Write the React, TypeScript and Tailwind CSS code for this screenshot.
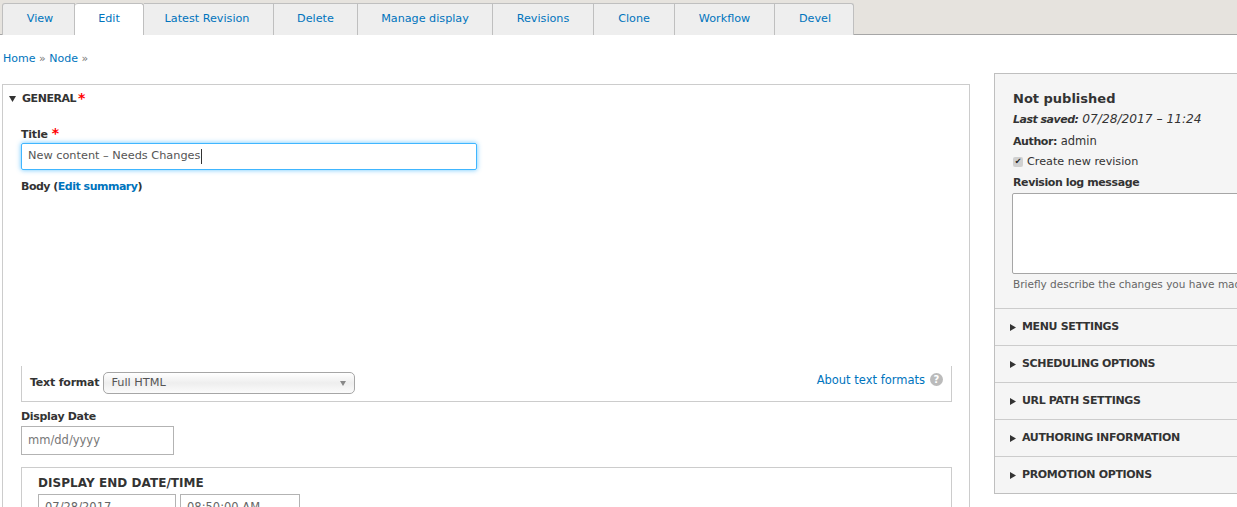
import React from 'react';

const tabs = [
  { label: 'View', width: 'w-[73px]', pad: 'pl-[3px]' },
  { label: 'Edit', width: 'w-[69px]', active: true, pad: '' },
  { label: 'Latest Revision', width: 'w-[130px]', pad: 'pr-[3px]' },
  { label: 'Delete', width: 'w-[84px]', pad: '' },
  { label: 'Manage display', width: 'w-[135px]', pad: '' },
  { label: 'Revisions', width: 'w-[101px]', pad: '' },
  { label: 'Clone', width: 'w-[81px]', pad: '' },
  { label: 'Workflow', width: 'w-[100px]', pad: '' },
  { label: 'Devel', width: 'w-[79px]', pad: 'pl-[2px]' },
];

const sections = [
  'MENU SETTINGS',
  'SCHEDULING OPTIONS',
  'URL PATH SETTINGS',
  'AUTHORING INFORMATION',
  'PROMOTION OPTIONS',
];

function Triangle({ open }: { open?: boolean }) {
  return open ? (
    <svg width="7" height="6" viewBox="0 0 7 6" className="shrink-0">
      <path d="M0 0h7L3.5 6z" fill="#333" />
    </svg>
  ) : (
    <svg width="6" height="7" viewBox="0 0 6 7" className="shrink-0">
      <path d="M0 0l6 3.5L0 7z" fill="#333" />
    </svg>
  );
}

export default function App() {
  return (
    <div className="h-[507px] w-[1237px] overflow-hidden bg-white font-['DejaVu_Sans',sans-serif] text-[12px] text-[#333]">
      <div className="flex h-[35px] border-b border-[#a6a6a6] bg-[#e6e3de] pl-[2px] pt-[3px]">
        {tabs.map(tab => (
          <a
            key={tab.label}
            className={`-mb-px flex ${tab.width} ${tab.pad} items-center justify-center border-r border-t border-[#bfbfbf] text-[11.2px] text-[#0074bd] first:border-l first:rounded-tl-[3px] last:rounded-tr-[3px] ${
              tab.active ? 'rounded-t-[3px] bg-white' : 'bg-[#eeeeee]'
            }`}
          >
            {tab.label}
          </a>
        ))}
      </div>

      <div className="pl-[3px] pt-[17px] text-[11px] leading-[14px] text-[#777]">
        <a className="text-[#0074bd]">Home</a> » <a className="text-[#0074bd]">Node</a> »
      </div>

      <div className="mt-[18px] flex items-start pl-[2px]">
        <div className="h-[600px] w-[968px] shrink-0 border border-[#ccc] pl-[18px] pr-[17px]">
          <div className="-ml-[12px] flex h-[28px] items-center gap-[6px]">
            <Triangle open />
            <span className="text-[11px] font-bold tracking-[-0.45px]">GENERAL</span>
            <span className="-ml-[4px] -mt-[2px] text-[14px] font-bold text-[#f00]">*</span>
          </div>

          <div className="mt-[14px] flex h-[16px] items-center gap-[4px] text-[11px] font-bold tracking-[-0.2px]">
            Title <span className="-mt-[4px] text-[14px] font-bold text-[#f00]">*</span>
          </div>
          <div className="flex h-[27px] w-[456px] items-center rounded-[2px] border border-[#40b6ff] pl-[6px] text-[11.3px] text-[#555] shadow-[0_0_5px_rgba(64,182,255,0.8)]">
            New content – Needs Changes
            <span className="ml-px h-[15px] w-px bg-[#333]" />
          </div>

          <div className="mt-[9px] h-[16px] text-[11px] font-bold leading-[16px] tracking-[-0.5px]">
            Body (<a className="text-[#0074bd]">Edit summary</a>)
          </div>

          <div className="mt-[171px] flex h-[36px] w-[931px] items-start justify-between border-x border-b border-[#ccc] pl-[8px] pr-[8px] pt-[6px]">
            <div className="flex items-center gap-[4px]">
              <span className="text-[11px] font-bold tracking-[-0.2px]">Text format</span>
              <div className="flex h-[22px] w-[252px] items-center justify-between rounded-[5px] border border-[#a6a6a6] bg-gradient-to-b from-white via-[#eeeeee] to-[#fbfbfb] pl-[7px] pr-[8px] text-[11.3px] text-[#555]">
                Full HTML
                <svg width="6" height="5" viewBox="0 0 6 5">
                  <path d="M0 0h6L3 5z" fill="#888" />
                </svg>
              </div>
            </div>
            <div className="flex items-center gap-[5px]">
              <a className="text-[11.5px] text-[#0074bd]">About text formats</a>
              <span className="-mt-[2px] flex h-[13px] w-[13px] items-center justify-center rounded-full bg-[#bbb] text-[10px] font-bold text-white">
                ?
              </span>
            </div>
          </div>

          <div className="mt-[7px] h-[16px] text-[11px] font-bold leading-[16px] tracking-[-0.3px]">Display Date</div>
          <div className="mt-px flex h-[29px] w-[153px] items-center border border-[#b3b3b3] pl-[6px] text-[11.5px] text-[#777]">
            mm/dd/yyyy
          </div>

          <div className="mt-[12px] h-[120px] w-[931px] border border-[#ccc] pl-[16px]">
            <div className="pt-[7px] text-[12px] font-bold leading-[16px] tracking-[0.05px]">DISPLAY END DATE/TIME</div>
            <div className="mt-[3px] flex gap-[4px] text-[11.5px] text-[#666]">
              <div className="flex h-[28px] w-[138px] items-center border border-[#b3b3b3] pl-[6px]">07/28/2017</div>
              <div className="flex h-[28px] w-[120px] items-center border border-[#b3b3b3] pl-[6px]">08:50:00 AM</div>
            </div>
          </div>
        </div>

        <div className="-mt-[11px] ml-[24px] w-[260px] shrink-0 border border-[#bfbfbf] bg-[#f5f5f5]">
          <div className="h-[234px] pl-[18px] pt-[16px]">
            <div className="text-[13px] font-bold leading-[18px]">Not published</div>
            <div className="mt-[3px] text-[12.2px] italic leading-[16px]">
              <b className="text-[11px] tracking-[-0.5px]">Last saved:</b> 07/28/2017 – 11:24
            </div>
            <div className="mt-[5px] text-[11.5px] leading-[16px]">
              <b className="text-[11px] tracking-[-0.4px]">Author:</b> admin
            </div>
            <div className="mt-[4px] flex items-center gap-[4px] text-[11.2px] leading-[16px]">
              <span className="flex h-[10px] w-[10px] items-center justify-center rounded-[2px] bg-[#d0d0d0] text-[8px] leading-none text-[#222]">
                ✔
              </span>
              Create new revision
            </div>
            <div className="mt-[5px] text-[11px] font-bold leading-[16px] tracking-[-0.4px]">Revision log message</div>
            <div className="-ml-px mt-[2px] h-[81px] w-[260px] rounded-[2px] border border-[#a6a6a6] bg-white" />
            <div className="mt-[3px] whitespace-nowrap text-[10.5px] leading-[14px] text-[#666]">
              Briefly describe the changes you have made
            </div>
          </div>
          {sections.map(section => (
            <div
              key={section}
              className="flex h-[37px] items-center gap-[6px] border-t border-[#ccc] pl-[15px] text-[11px] font-bold tracking-[-0.35px]"
            >
              <Triangle />
              {section}
            </div>
          ))}
        </div>
      </div>
    </div>
  );
}
